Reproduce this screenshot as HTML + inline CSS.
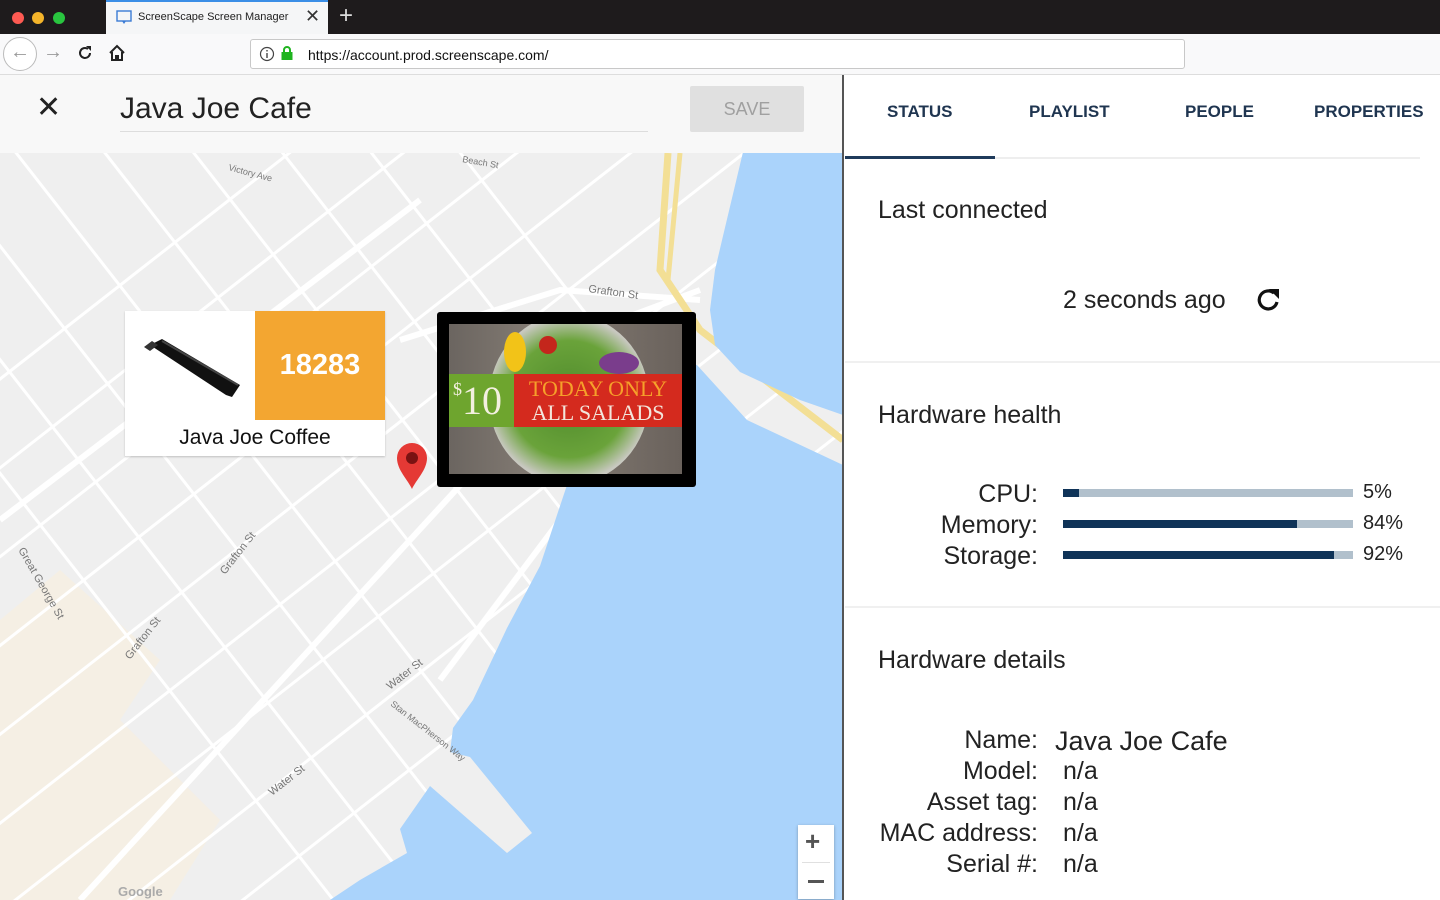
<!DOCTYPE html>
<html><head><meta charset="utf-8"><style>
*{margin:0;padding:0;box-sizing:border-box}
html,body{width:1440px;height:900px;overflow:hidden}
body{font-family:"Liberation Sans",Roboto,sans-serif;background:#fff;position:relative}
.abs{position:absolute}
.tabbar{left:0;top:0;width:1440px;height:34px;background:#1e1b1c}
.dot{top:12px;width:12px;height:12px;border-radius:50%}
.tab{left:106px;top:0;width:222px;height:34px;background:#f5f6f7;border-top:2px solid #3a8ee6}
.toolbar{left:0;top:34px;width:1440px;height:41px;background:#f9f9fa;border-bottom:1px solid #ddd}
.url{left:250px;top:39px;width:935px;height:30px;background:#fff;border:1px solid #c8c8c8;border-radius:3px}
.lhead{left:0;top:75px;width:843px;height:78px;background:#f8f8f8}
.right{left:845px;top:75px;width:595px;height:825px;background:#fff}
.tabt{top:102px;font-size:17px;font-weight:bold;color:#1f3550}
.h{font-size:25px;color:#222;white-space:nowrap}
.lbl{font-size:25px;color:#222;text-align:right;width:200px;white-space:nowrap}
.val{font-size:25px;color:#222;white-space:nowrap}
</style></head><body>
<div class="abs tabbar"></div>
<div class="abs dot" style="left:12px;background:#fd5a52"></div>
<div class="abs dot" style="left:32px;background:#f4b42a"></div>
<div class="abs dot" style="left:53px;background:#29c53f"></div>
<div class="abs tab"></div>
<svg class="abs" style="left:116px;top:10px" width="16" height="15"><rect x="1" y="1" width="14" height="10" fill="none" stroke="#3a7bd5" stroke-width="1.4"/><path d="M6 11l2 3 2-3" fill="#3a7bd5"/></svg>
<div class="abs" style="left:138px;top:11px;font-size:11px;color:#222">ScreenScape Screen Manager</div>
<div class="abs" style="left:305px;top:6px;font-size:18px;color:#333">✕</div>
<div class="abs" style="left:339px;top:2px;font-size:24px;color:#ddd">+</div>
<div class="abs toolbar"></div>
<div class="abs" style="left:3px;top:37px;width:34px;height:34px;border-radius:50%;border:1px solid #bbb;background:#fff"></div>
<div class="abs" style="left:10px;top:41px;font-size:20px;color:#999">←</div>
<div class="abs" style="left:43px;top:41px;font-size:20px;color:#999">→</div>
<svg class="abs" style="left:76px;top:44px" width="18" height="18"><path d="M14 9a5 5 0 1 1-2-4" fill="none" stroke="#222" stroke-width="2"/><path d="M10 2h5v5z" fill="#222"/></svg>
<svg class="abs" style="left:108px;top:44px" width="18" height="18"><path d="M2 9L9 2l7 7M4 8v8h4v-4h2v4h4V8" fill="none" stroke="#222" stroke-width="2"/></svg>
<div class="abs url"></div>
<svg class="abs" style="left:259px;top:46px" width="16" height="16"><circle cx="8" cy="8" r="6.5" fill="none" stroke="#444" stroke-width="1.2"/><rect x="7.3" y="7" width="1.4" height="5" fill="#444"/><rect x="7.3" y="4" width="1.4" height="1.5" fill="#444"/></svg>
<svg class="abs" style="left:280px;top:45px" width="14" height="16"><path d="M4 7V5a3 3 0 0 1 6 0v2" fill="none" stroke="#1fb41f" stroke-width="2"/><rect x="1.5" y="7" width="11" height="8" fill="#1fb41f"/></svg>
<div class="abs" style="left:308px;top:47px;font-size:14px;color:#111">https://account.prod.screenscape.com/</div>

<div class="abs lhead"></div>
<div class="abs" style="left:36px;top:90px;font-size:30px;color:#222">✕</div>
<div class="abs" style="left:120px;top:92px;font-size:30px;color:#222">Java Joe Cafe</div>
<div class="abs" style="left:120px;top:131px;width:528px;height:1px;background:#ddd"></div>
<div class="abs" style="left:690px;top:86px;width:114px;height:46px;background:#e0e0e0;border-radius:2px;color:#a0a0a0;font-size:18px;text-align:center;line-height:46px">SAVE</div>

<div class="abs" style="left:0;top:153px;width:843px;height:747px;overflow:hidden">
<svg width="843" height="747" viewBox="0 153 843 747" style="display:block">
<rect x="0" y="153" width="843" height="747" fill="#efefef"/>
<g fill="#f8f0e0" opacity="0.7"><path d="M0 620L60 570 160 660 120 720 220 820 170 900 0 900z"/></g>
<g stroke="#fff" stroke-width="3" fill="none">
<g transform="rotate(-38 300 500)">
<line x1="-400" y1="220" x2="1000" y2="220"/><line x1="-400" y1="290" x2="1000" y2="290"/><line x1="-400" y1="360" x2="1000" y2="360"/>
<line x1="-400" y1="430" x2="1000" y2="430"/><line x1="-400" y1="500" x2="1000" y2="500"/><line x1="-400" y1="570" x2="1000" y2="570"/>
<line x1="-400" y1="640" x2="1000" y2="640"/><line x1="-400" y1="710" x2="1000" y2="710"/><line x1="-400" y1="780" x2="1000" y2="780"/>
</g>
<g transform="rotate(52 300 500)">
<line x1="-300" y1="160" x2="1100" y2="160"/><line x1="-300" y1="230" x2="1100" y2="230"/><line x1="-300" y1="300" x2="1100" y2="300"/>
<line x1="-300" y1="370" x2="1100" y2="370"/><line x1="-300" y1="440" x2="1100" y2="440"/><line x1="-300" y1="510" x2="1100" y2="510"/>
<line x1="-300" y1="580" x2="1100" y2="580"/><line x1="-300" y1="650" x2="1100" y2="650"/><line x1="-300" y1="720" x2="1100" y2="720"/>
</g>
</g>
<g stroke="#fff" stroke-width="6" fill="none">
<path d="M0 520L420 200"/><path d="M80 900L520 420"/><path d="M440 680L560 520 620 320 700 290"/><path d="M400 340L560 290 700 300"/>
</g>
<path d="M668 153L660 270 700 330 843 440" stroke="#f3df95" stroke-width="7" fill="none"/>
<path d="M680 153L668 280" stroke="#f3df95" stroke-width="5" fill="none"/>
<g fill="#aad3fb">
<path d="M743 152L843 152 843 415 800 400 740 372 715 345 710 310 715 270 723 236z"/>
<path d="M843 465L747 420 697 365 640 360 600 420 567 485 540 566 507 628 473 700 453 728 450 752 470 757 532 833 507 853 430 786 400 829 407 853 360 880 330 900 843 900z"/>
</g>
<g font-size="9" fill="#777" font-family="Liberation Sans,sans-serif">
<text x="588" y="292" transform="rotate(8 588 292)" font-size="11">Grafton St</text>
<text x="462" y="162" transform="rotate(10 462 162)">Beach St</text>
<text x="228" y="170" transform="rotate(15 228 170)">Victory Ave</text>
<text x="18" y="550" transform="rotate(60 18 550)" font-size="11">Great George St</text>
<text x="130" y="660" transform="rotate(-52 130 660)" font-size="11">Grafton St</text>
<text x="225" y="575" transform="rotate(-52 225 575)" font-size="11">Grafton St</text>
<text x="390" y="690" transform="rotate(-38 390 690)" font-size="11">Water St</text>
<text x="272" y="796" transform="rotate(-38 272 796)" font-size="11">Water St</text>
<text x="390" y="705" transform="rotate(38 390 705)">Stan MacPherson Way</text>
<text x="118" y="896" fill="#aaa" font-size="13" font-weight="bold">Google</text>
</g>
</svg>
</div>
<div class="abs" style="left:125px;top:311px;width:260px;height:145px;background:#fff;box-shadow:0 1px 2px rgba(0,0,0,.2)"></div>
<div class="abs" style="left:255px;top:311px;width:130px;height:109px;background:#f3a631;color:#fff;font-size:29px;font-weight:bold;text-align:center;line-height:109px">18283</div>
<svg class="abs" style="left:140px;top:335px" width="105" height="65"><path d="M10 10L22 4 100 50 92 62 86 60z" fill="#111"/><path d="M4 12l8-6 6 4-8 6z" fill="#333"/><path d="M22 6L98 50" stroke="#444" stroke-width="2"/></svg>
<div class="abs" style="left:125px;top:426px;width:260px;text-align:center;font-size:21px;color:#111">Java Joe Coffee</div>
<svg class="abs" style="left:396px;top:442px" width="32" height="48"><path d="M16 47C12 38 1 28 1 16a15 15 0 0 1 30 0c0 12-11 22-15 31z" fill="#e53935"/><circle cx="16" cy="16" r="6" fill="#7a1212"/></svg>
<div class="abs" style="left:437px;top:312px;width:259px;height:175px;background:#000;border-radius:3px"></div>
<div class="abs" style="left:449px;top:324px;width:233px;height:150px;background:linear-gradient(90deg,#6b6560,#857d75 40%,#6a625c);overflow:hidden">
<div class="abs" style="left:40px;top:-10px;width:160px;height:170px;border-radius:50%;background:radial-gradient(circle,#4f8a2c 0,#6aa33a 50%,#c8c8c0 70%,#c8c8c0 72%,transparent 73%)"></div>
<div class="abs" style="left:55px;top:8px;width:22px;height:40px;border-radius:50%;background:#f2c318"></div>
<div class="abs" style="left:90px;top:12px;width:18px;height:18px;border-radius:50%;background:#c4261c"></div>
<div class="abs" style="left:150px;top:28px;width:40px;height:22px;border-radius:50%;background:#7a3d8c"></div>
<div class="abs" style="left:0;top:50px;width:65px;height:53px;background:#6ea52e;color:#f3f0e0;font-family:'Liberation Serif',serif;font-size:40px;line-height:53px;padding-left:4px"><span style="font-size:18px;vertical-align:top;line-height:30px">$</span>10</div>
<div class="abs" style="left:65px;top:50px;width:168px;height:53px;background:#d42a1e;font-family:'Liberation Serif',serif;font-size:22px;line-height:24px;padding-top:3px;text-align:center"><div style="color:#f6a02a">TODAY ONLY</div><div style="color:#f3e6dc">ALL SALADS</div></div>
</div>
<div class="abs" style="left:798px;top:825px;width:36px;height:74px;background:#fff;box-shadow:0 1px 3px rgba(0,0,0,.3)"></div>
<div class="abs" style="left:805px;top:826px;font-size:26px;color:#555;font-weight:bold">+</div>
<div class="abs" style="left:802px;top:862px;width:28px;height:1px;background:#e0e0e0"></div>
<div class="abs" style="left:808px;top:880px;width:16px;height:3px;background:#555"></div>

<div class="abs" style="left:842px;top:75px;width:2px;height:825px;background:#555"></div>
<div class="abs right"></div>
<div class="abs tabt" style="left:887px">STATUS</div>
<div class="abs tabt" style="left:1029px">PLAYLIST</div>
<div class="abs tabt" style="left:1185px">PEOPLE</div>
<div class="abs tabt" style="left:1314px">PROPERTIES</div>
<div class="abs" style="left:845px;top:157px;width:575px;height:2px;background:#eee"></div>
<div class="abs" style="left:845px;top:156px;width:150px;height:3px;background:#1f3b5b"></div>
<div class="abs h" style="left:878px;top:196px">Last connected</div>
<div class="abs h" style="left:1063px;top:286px">2 seconds ago</div>
<svg class="abs" style="left:1254px;top:285px" width="30" height="30"><path d="M23 17a9 9 0 1 1-3-9" fill="none" stroke="#111" stroke-width="3.2"/><path d="M15 4h10v10z" fill="#111"/></svg>
<div class="abs" style="left:845px;top:361px;width:595px;height:2px;background:#f0f0f0"></div>
<div class="abs h" style="left:878px;top:401px">Hardware health</div>
<div class="abs lbl" style="left:838px;top:480px">CPU:</div>
<div class="abs lbl" style="left:838px;top:511px">Memory:</div>
<div class="abs lbl" style="left:838px;top:542px">Storage:</div>
<div class="abs" style="left:1063px;top:489px;width:290px;height:8px;background:#b1c0cc"><div style="width:16px;height:8px;background:#0f3358"></div></div>
<div class="abs" style="left:1063px;top:520px;width:290px;height:8px;background:#b1c0cc"><div style="width:234px;height:8px;background:#0f3358"></div></div>
<div class="abs" style="left:1063px;top:551px;width:290px;height:8px;background:#b1c0cc"><div style="width:271px;height:8px;background:#0f3358"></div></div>
<div class="abs" style="left:1363px;top:481px;font-size:20px;color:#222">5%</div>
<div class="abs" style="left:1363px;top:512px;font-size:20px;color:#222">84%</div>
<div class="abs" style="left:1363px;top:543px;font-size:20px;color:#222">92%</div>
<div class="abs" style="left:845px;top:606px;width:595px;height:2px;background:#f0f0f0"></div>
<div class="abs h" style="left:878px;top:646px">Hardware details</div>
<div class="abs lbl" style="left:838px;top:726px">Name:</div>
<div class="abs lbl" style="left:838px;top:757px">Model:</div>
<div class="abs lbl" style="left:838px;top:788px">Asset tag:</div>
<div class="abs lbl" style="left:838px;top:819px">MAC address:</div>
<div class="abs lbl" style="left:838px;top:850px">Serial #:</div>
<div class="abs val" style="left:1055px;top:726px;font-size:27px">Java Joe Cafe</div>
<div class="abs val" style="left:1063px;top:757px">n/a</div>
<div class="abs val" style="left:1063px;top:788px">n/a</div>
<div class="abs val" style="left:1063px;top:819px">n/a</div>
<div class="abs val" style="left:1063px;top:850px">n/a</div>
</body></html>
